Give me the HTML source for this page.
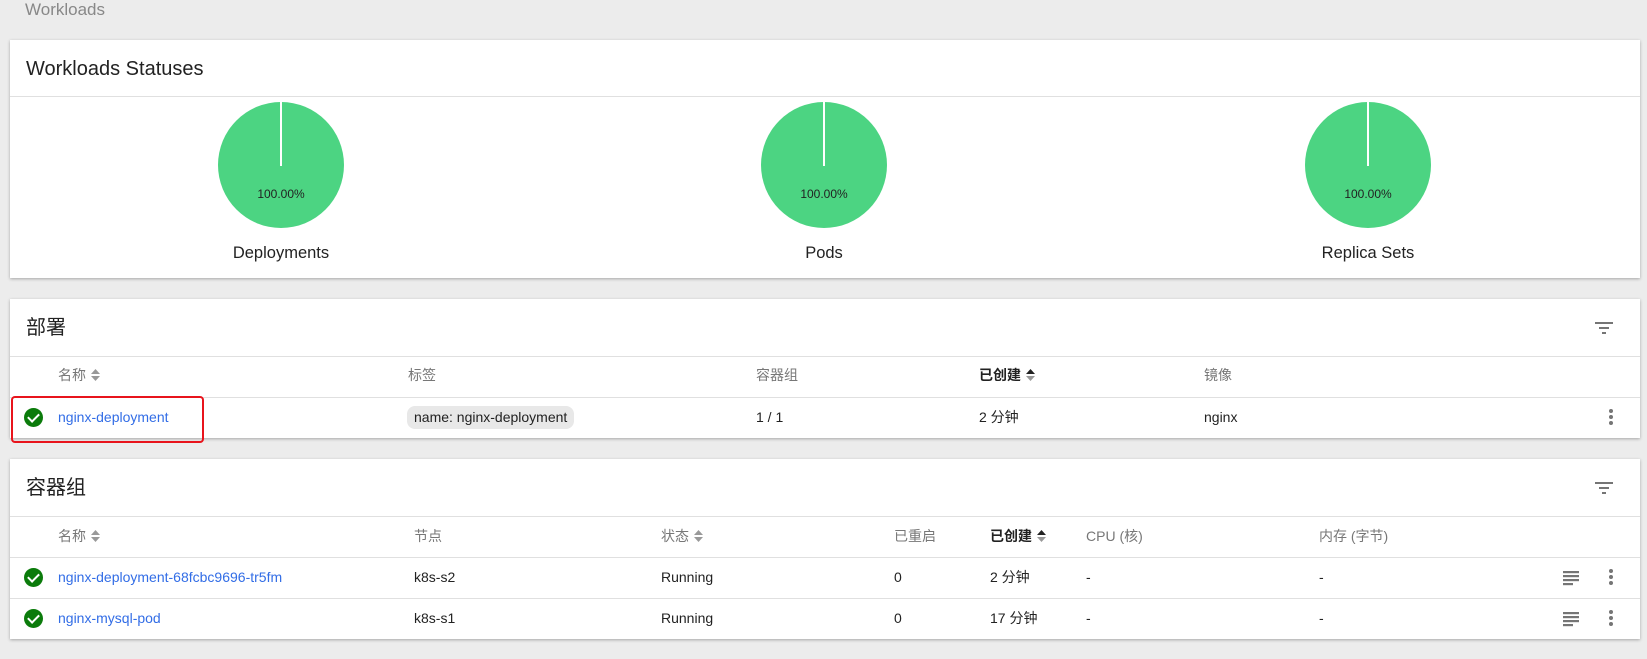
<!DOCTYPE html><html><head><meta charset="utf-8"><style>
body{margin:0;width:1647px;height:659px;background:#ececec;font-family:"Liberation Sans","Noto Sans CJK SC",sans-serif;position:relative;overflow:hidden}
.a{position:absolute;white-space:nowrap;line-height:17px}
.card{position:absolute;left:10px;width:1630px;background:#fff;box-shadow:0 1px 3px rgba(0,0,0,.3)}
.hr{position:absolute;left:0;right:0;height:1px;background:#e0e0e0}
.t{font-size:20px;color:#222;line-height:26px}
.h{font-size:14px;color:#777}
.c{font-size:14px;color:#222}
.l{font-size:14px;color:#326de6}
.sort{display:inline-block;vertical-align:middle;margin-left:5px;width:9px;height:12px;position:relative;top:-1px}
.chk{position:absolute;width:19px;height:19px;border-radius:50%;background:#0b7b0b}
.chk:after{content:"";position:absolute;left:6px;top:3px;width:5px;height:9px;border:solid #fff;border-width:0 2.5px 2.5px 0;transform:rotate(45deg)}
.lbl{background:#e8e8e8;border-radius:8px;padding:3px 7px}
</style></head><body>
<div class="a" style="left:25px;top:1px;font-size:17px;color:#888">Workloads</div>

<div class="card" style="top:40px;height:238px">
<div class="a t" style="left:16px;top:16px">Workloads Statuses</div>
<div class="hr" style="top:56px"></div>
<svg class="a" style="left:0;top:0" width="1630" height="238">
<circle cx="271" cy="125" r="63" fill="#4cd482"/><line x1="271" y1="62" x2="271" y2="126" stroke="#fff" stroke-width="2"/>
<circle cx="814" cy="125" r="63" fill="#4cd482"/><line x1="814" y1="62" x2="814" y2="126" stroke="#fff" stroke-width="2"/>
<circle cx="1358" cy="125" r="63" fill="#4cd482"/><line x1="1358" y1="62" x2="1358" y2="126" stroke="#fff" stroke-width="2"/>
<g font-family="Liberation Sans" font-size="12" fill="#222" text-anchor="middle"><text x="271" y="158">100.00%</text><text x="814" y="158">100.00%</text><text x="1358" y="158">100.00%</text></g>
<g font-family="Liberation Sans" font-size="16.5" fill="#222" text-anchor="middle"><text x="271" y="218">Deployments</text><text x="814" y="218">Pods</text><text x="1358" y="218">Replica Sets</text></g>
</svg>
</div>

<svg width="0" height="0" style="position:absolute"><defs><g id="s"><path d="M0 5L4.5 0L9 5Z" fill="#999"/><path d="M0 7L4.5 12L9 7Z" fill="#999"/></g><g id="s2"><path d="M0 5L4.5 0L9 5Z" fill="#222"/><path d="M0 7L4.5 12L9 7Z" fill="#999"/></g>
<g id="f"><rect x="0" y="0" width="18" height="2" fill="#757575"/><rect x="4" y="5" width="10" height="2" fill="#757575"/><rect x="7" y="10" width="4" height="2" fill="#757575"/></g>
<g id="d"><circle cx="2" cy="2" r="2" fill="#757575"/><circle cx="2" cy="8" r="2" fill="#757575"/><circle cx="2" cy="14" r="2" fill="#757575"/></g>
<g id="m"><rect x="0" y="0" width="16" height="2.2" fill="#757575"/><rect x="0" y="4" width="16" height="2.2" fill="#757575"/><rect x="0" y="8" width="16" height="2.2" fill="#757575"/><rect x="0" y="12" width="10" height="2.2" fill="#757575"/></g></defs></svg>

<div class="card" style="top:299px;height:139px">
<div class="a t" style="left:16px;top:16px">部署</div>
<svg class="a" style="left:1585px;top:23px" width="18" height="12"><use href="#f"/></svg>
<div class="hr" style="top:57px"></div>
<div class="a h" style="left:48px;top:68px">名称<svg class="sort" width="9" height="12"><use href="#s"/></svg></div>
<div class="a h" style="left:398px;top:68px">标签</div>
<div class="a h" style="left:746px;top:68px">容器组</div>
<div class="a h" style="left:969px;top:68px;color:#222;font-weight:bold">已创建<svg class="sort" width="9" height="12"><use href="#s2"/></svg></div>
<div class="a h" style="left:1194px;top:68px">镜像</div>
<div class="hr" style="top:98px"></div>
<div class="chk" style="left:14px;top:109px"></div>
<div class="a l" style="left:48px;top:110px">nginx-deployment</div>
<div class="a c lbl" style="left:397px;top:107px">name: nginx-deployment</div>
<div class="a c" style="left:746px;top:110px">1 / 1</div>
<div class="a c" style="left:969px;top:110px">2 分钟</div>
<div class="a c" style="left:1194px;top:110px">nginx</div>
<svg class="a" style="left:1599px;top:110px" width="4" height="16"><use href="#d"/></svg>
</div>
<div class="a" style="left:11px;top:396px;width:189px;height:43px;border:2px solid #e8141c;border-radius:4px"></div>

<div class="card" style="top:459px;height:180px">
<div class="a t" style="left:16px;top:16px">容器组</div>
<svg class="a" style="left:1585px;top:23px" width="18" height="12"><use href="#f"/></svg>
<div class="hr" style="top:57px"></div>
<div class="a h" style="left:48px;top:69px">名称<svg class="sort" width="9" height="12"><use href="#s"/></svg></div>
<div class="a h" style="left:404px;top:69px">节点</div>
<div class="a h" style="left:651px;top:69px">状态<svg class="sort" width="9" height="12"><use href="#s"/></svg></div>
<div class="a h" style="left:884px;top:69px">已重启</div>
<div class="a h" style="left:980px;top:69px;color:#222;font-weight:bold">已创建<svg class="sort" width="9" height="12"><use href="#s2"/></svg></div>
<div class="a h" style="left:1076px;top:69px">CPU (核)</div>
<div class="a h" style="left:1309px;top:69px">内存 (字节)</div>
<div class="hr" style="top:98px"></div>
<div class="chk" style="left:14px;top:109px"></div>
<div class="a l" style="left:48px;top:110px">nginx-deployment-68fcbc9696-tr5fm</div>
<div class="a c" style="left:404px;top:110px">k8s-s2</div>
<div class="a c" style="left:651px;top:110px">Running</div>
<div class="a c" style="left:884px;top:110px">0</div>
<div class="a c" style="left:980px;top:110px">2 分钟</div>
<div class="a c" style="left:1076px;top:110px">-</div>
<div class="a c" style="left:1309px;top:110px">-</div>
<svg class="a" style="left:1553px;top:112px" width="16" height="15"><use href="#m"/></svg>
<svg class="a" style="left:1599px;top:110px" width="4" height="16"><use href="#d"/></svg>
<div class="hr" style="top:139px"></div>
<div class="chk" style="left:14px;top:150px"></div>
<div class="a l" style="left:48px;top:151px">nginx-mysql-pod</div>
<div class="a c" style="left:404px;top:151px">k8s-s1</div>
<div class="a c" style="left:651px;top:151px">Running</div>
<div class="a c" style="left:884px;top:151px">0</div>
<div class="a c" style="left:980px;top:151px">17 分钟</div>
<div class="a c" style="left:1076px;top:151px">-</div>
<div class="a c" style="left:1309px;top:151px">-</div>
<svg class="a" style="left:1553px;top:153px" width="16" height="15"><use href="#m"/></svg>
<svg class="a" style="left:1599px;top:151px" width="4" height="16"><use href="#d"/></svg>
</div>
</body></html>
